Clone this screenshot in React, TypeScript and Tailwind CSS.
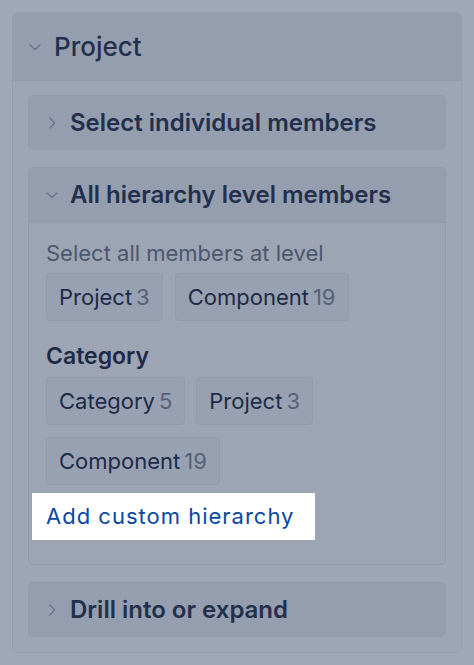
import { ReactNode } from "react";

function ChevronDown() {
  return (
    <svg width="14" height="14" viewBox="0 0 14 14" fill="none" className="shrink-0">
      <path d="M2 5 L7 9.5 L12 5" stroke="#6b7587" strokeWidth="1.4" strokeLinecap="round" strokeLinejoin="round" />
    </svg>
  );
}

function ChevronRight() {
  return (
    <svg width="14" height="14" viewBox="0 0 14 14" fill="none" className="shrink-0">
      <path d="M5 2 L9.5 7 L5 12" stroke="#6b7587" strokeWidth="1.4" strokeLinecap="round" strokeLinejoin="round" />
    </svg>
  );
}

function Chip({ label, count }: { label: string; count: number }) {
  return (
    <div className="h-[48px] flex items-center gap-[4px] px-[12px] rounded-[4px] bg-[#98a1b1] border border-[#929bac] text-[22px]">
      <span className="text-[#1e2a47]">{label}</span>
      <span className="text-[#566177]">{count}</span>
    </div>
  );
}

function Card({ title, open, children }: { title: string; open?: boolean; children?: ReactNode }) {
  return (
    <div className="rounded-[5px] border border-[#929bab] bg-[#9da5b4] overflow-hidden">
      <div
        className={
          "flex items-center gap-[11px] pl-[16px] bg-[#959eaf] " +
          (open ? "h-[55px] border-b border-[#929bab]" : "h-[53px]")
        }
      >
        {open ? <ChevronDown /> : <ChevronRight />}
        <span className="text-[24px] font-semibold text-[#23304d]">{title}</span>
      </div>
      {children}
    </div>
  );
}

export default function App() {
  return (
    <div
      className="w-[474px] h-[665px] bg-[#a0a8b8] pt-[12px] px-[12px]"
      style={{ fontFamily: "Inter, 'Noto Sans', sans-serif" }}
    >
      <div className="rounded-[6px] border border-[#949dad] bg-[#9ea6b5] overflow-hidden">
        <div className="h-[68px] flex items-center gap-[12px] pl-[15px] bg-[#959eaf] border-b border-[#939cac]">
          <ChevronDown />
          <span className="text-[26px] font-medium text-[#23304d]">Project</span>
        </div>
        <div className="px-[15px] pt-[14px] pb-[15px] flex flex-col gap-[17px]">
          <Card title="Select individual members" />
          <Card title="All hierarchy level members" open>
            <div className="pl-[17px] pr-[16px] pt-[16px] pb-[24px]">
              <div className="text-[22px] text-[#4c576d] leading-[28px]">Select all members at level</div>
              <div className="flex flex-wrap gap-[12px] mt-[6px]">
                <Chip label="Project" count={3} />
                <Chip label="Component" count={19} />
              </div>
              <div className="text-[23px] font-semibold text-[#1e2a47] mt-[20px] leading-[30px]">Category</div>
              <div className="flex flex-wrap gap-x-[11px] gap-y-[12px] mt-[6px]">
                <Chip label="Category" count={5} />
                <Chip label="Project" count={3} />
                <Chip label="Component" count={19} />
              </div>
              <div className="mt-[8px] -ml-[14px] w-[283px] h-[47px] bg-white flex items-center pl-[14px]">
                <span className="text-[22px] tracking-[1px] text-[#0a47a3]">Add custom hierarchy</span>
              </div>
            </div>
          </Card>
          <Card title="Drill into or expand" />
        </div>
      </div>
    </div>
  );
}
